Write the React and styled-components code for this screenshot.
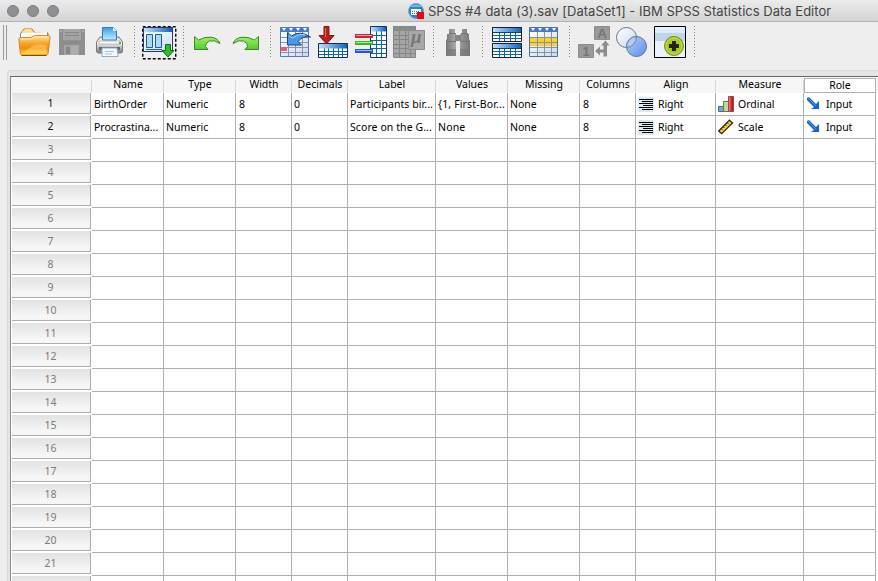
import React from 'react';
import styled, { createGlobalStyle } from 'styled-components';

const GlobalStyle = createGlobalStyle`
  body {
    margin: 0;
    background: #fff;
    overflow: hidden;
  }
  * {
    box-sizing: border-box;
  }
`;

const Window = styled.div`
  display: flex;
  flex-direction: column;
  width: 878px;
  height: 581px;
  overflow: hidden;
  background: #eeeeee;
  font-family: "Noto Sans", "Open Sans", sans-serif;
  color: #000;
`;

const TitleBar = styled.header`
  display: flex;
  flex: none;
  align-items: center;
  height: 22px;
  padding-left: 7px;
  border-bottom: 1px solid #b1b1b1;
  border-top-left-radius: 4px;
  background: linear-gradient(#ebebeb, #d3d3d3);
`;

const Light = styled.span`
  width: 12px;
  height: 12px;
  margin-right: 8px;
  border: 1px solid #7c7b80;
  border-radius: 50%;
  background: #918f94;
`;

const Title = styled.div`
  display: flex;
  align-items: center;
  margin-left: 341px;
  padding-top: 1px;
  gap: 3px;
  color: #454545;
  font: 13px/20px Inter, Roboto, sans-serif;
  letter-spacing: 0.015px;
  white-space: nowrap;
`;

const Toolbar = styled.div`
  display: flex;
  flex: none;
  height: 48px;
  padding: 4px 0 0 3px;
`;

const Grip = styled.div`
  width: 4px;
  height: 35px;
  margin-top: -1px;
  border: solid #999;
  border-width: 0 1px;
`;

const Separator = styled.div`
  width: 1px;
  height: 32px;
  margin-left: ${p => p.$gap}px;
  background: repeating-linear-gradient(#858585 0 1px, transparent 1px 3px);
`;

const Tool = styled.svg`
  display: block;
  flex: none;
  margin-left: ${p => p.$gap}px;
`;

const Panel = styled.main`
  flex: 1;
  min-height: 0;
  margin-left: 7px;
  padding: 5px 0 0 3px;
  border: solid #d9d9d9;
  border-width: 1px 0 0 1px;
  border-top-left-radius: 4px;
  background: #e4e4e4;
`;

const Sheet = styled.div`
  margin-left: -1px;
  height: 505px;
  border: solid #666;
  border-width: 1px 0 0 1px;
  border-left-color: #8c8c8c;
  background: #fff;
  overflow: hidden;
`;

const columnTracks = '81px 72px 72px 56px 56px 88px 72px 72px 56px 80px 88px 72px';

const HeaderRow = styled.div`
  display: grid;
  grid-template-columns: ${columnTracks};
  height: 16px;
  background: #f6f6f6;
`;

const HeaderCell = styled.div`
  margin: ${p => (p.$selected ? '1px 0 0 0' : '3px 0 1px')};
  padding-left: ${p => (p.$selected ? 0 : 1)}px;
  border: ${p => (p.$selected ? '1px solid #b0b0b0' : '0 solid #d5d5d5')};
  border-right-width: 1px;
  background: ${p => (p.$selected ? '#fff' : 'none')};
  font-size: 10.5px;
  line-height: ${p => (p.$selected ? 12 : 9)}px;
  text-align: center;
  white-space: nowrap;
`;

const Row = styled.div`
  display: grid;
  grid-template-columns: ${columnTracks};
  height: 23px;
`;

const RowNumber = styled.div`
  height: 21px;
  margin: 0 1px 0 1px;
  padding-right: 1px;
  border: solid #adadad;
  border-width: 0 1px 1px 0;
  background: linear-gradient(#e2e2e2, #f6f6f6 80%);
  color: ${p => (p.$empty ? '#7b7b7b' : '#111')};
  font-size: 10.5px;
  line-height: 20px;
  text-align: center;
`;

const Cell = styled.div`
  display: flex;
  align-items: center;
  padding: 1px 0 0 ${p => p.$inset || 2}px;
  border: solid #b0b0b0;
  border-width: 0 1px 1px 0;
  font-size: 10.5px;
  line-height: 21px;
  letter-spacing: ${p => p.$tracking || 0}px;
  white-space: nowrap;
  overflow: hidden;
`;

const CellIcon = styled.svg`
  flex: none;
  margin: -1px ${p => p.$gap}px 0 0;
`;

const columns = [
  { name: 'Name' },
  { name: 'Type' },
  { name: 'Width', inset: 3 },
  { name: 'Decimals' },
  { name: 'Label', tracking: 0.08 },
  { name: 'Values', tracking: 0.15 },
  { name: 'Missing' },
  { name: 'Columns', inset: 3 },
  { name: 'Align', tracking: -0.1 },
  { name: 'Measure' },
  { name: 'Role', inset: 3, tracking: -0.1, selected: true },
];

const variables = [
  ['BirthOrder', 'Numeric', '8', '0', 'Participants bir...', '{1, First-Bor...', 'None', '8', 'Right', 'Ordinal', 'Input'],
  ['Procrastina...', 'Numeric', '8', '0', 'Score on the G...', 'None', 'None', '8', 'Right', 'Scale', 'Input'],
];

const lastRow = 21;

const Gradients = () => (
  <svg width="0" height="0" style={{ position: 'absolute' }}>
    <defs>
      <linearGradient id="orange" x2="0" y2="1">
        <stop stopColor="#ffe39a" /><stop offset=".4" stopColor="#f7a531" />
        <stop offset=".65" stopColor="#f58a08" /><stop offset="1" stopColor="#ffdc4a" />
      </linearGradient>
      <linearGradient id="blue" x2="1">
        <stop stopColor="#c0e4ff" /><stop offset="1" stopColor="#0763c7" />
      </linearGradient>
      <linearGradient id="sky" x2="0" y2="1">
        <stop stopColor="#319ef1" /><stop offset="1" stopColor="#c9eeff" />
      </linearGradient>
      <linearGradient id="gray" x2="0" y2="1">
        <stop stopColor="#ddd" /><stop offset=".35" stopColor="#fafafa" /><stop offset="1" stopColor="#777" />
      </linearGradient>
      <linearGradient id="green" x2="0" y2="1">
        <stop stopColor="#a2ef69" /><stop offset="1" stopColor="#50ce23" />
      </linearGradient>
      <linearGradient id="pale" x2="1" y2="1">
        <stop stopColor="#fff" /><stop offset="1" stopColor="#c8d8f4" />
      </linearGradient>
      <linearGradient id="venn" x2="1" y2="1">
        <stop stopColor="#bed3ff" /><stop offset="1" stopColor="#568bea" />
      </linearGradient>
      <linearGradient id="binocular" x2="1">
        <stop stopColor="#777" /><stop offset=".4" stopColor="#aaa" /><stop offset="1" stopColor="#777" />
      </linearGradient>
      <linearGradient id="red" x2="1">
        <stop stopColor="#ff9b94" /><stop offset=".5" stopColor="#ee2626" /><stop offset="1" stopColor="#bd0000" />
      </linearGradient>
    </defs>
  </svg>
);

const AppIcon = () => (
  <svg width="17" height="17" viewBox="0 0 17 17">
    <circle cx="8" cy="8" r="7.5" fill="#2687c7" stroke="#6badd9" />
    <path d="M2 4Q8-1 14 4Z" fill="#72bae7" />
    <path d="M3 6h10v6H3z" fill="#fff" />
    <path d="M4 8.500h8M4 10.500h8" stroke="#2377b5" strokeDasharray="1 1" />
    <path d="M9 9h7v7H9z" fill="#f70009" />
  </svg>
);

const OpenIcon = ({ gap }) => (
  <Tool $gap={gap} width="33" height="34">
    <path d="M3 20V7l3-4h8l3 4h13v15H3z" fill="#fbc658" stroke="#b96d16" />
    <path d="M4 6l3-3h6l3 4v2H4z" fill="#ffe27b" />
    <path d="M2 7h28v8H2z" fill="#4393e1" />
    <path d="M3 7l26-1v9H3z" fill="#f3faff" />
    <path d="M.8 13q0-1.500 2-1.500h10l4-2h14q1.500 0 1.300 2l-2 16q-.2 1.500-2 1.500H4q-1.500 0-1.700-1.500z" fill="url(#orange)" stroke="#d9800f" strokeWidth=".9" />
    <path d="M2.500 13h11l4-2h12" fill="none" stroke="#ffecb8" />
    <path d="M6 26.500Q17 15 29 20l-1 7H6z" fill="#ffe27d" opacity=".45" />
    <path d="M3.500 29.500h25" stroke="#87470c" />
  </Tool>
);

const SaveIcon = ({ gap }) => (
  <Tool $gap={gap} width="26" height="34">
    <path d="M0 3h26v26H0z" fill="#8f8f8f" />
    <path d="M4 3h18v11H4zM5 19h15v10H5z" fill="#a3a3a3" />
    <path d="M6 6.500h14M6 9.500h14M3 16.500h20" stroke="#858585" />
    <path d="M7 21h4v7H7z" fill="#868686" />
    <path d="M12 20h7v9h-7z" fill="#adadad" />
    <path d="M1 4h2v2H1zM23 4h2v2h-2z" fill="#a8a8a8" />
  </Tool>
);

const PrintIcon = ({ gap }) => (
  <Tool $gap={gap} width="27" height="34">
    <path d="M4 11h19l3.500 5v9q0 2-2 2h-22q-2 0-2-2v-9z" fill="url(#gray)" stroke="#777" />
    <path d="M6.500 1.500h11l3 3V14h-14z" fill="url(#sky)" stroke="#287fc9" />
    <path d="M17 1v4h4z" fill="#d7efff" />
    <path d="M3 15h21v3H3z" fill="#f9f9f9" stroke="#999" strokeWidth=".6" />
    <path d="M23 16h2v2h-2z" fill="#3ebb34" />
    <path d="M3 21h21v3H3z" fill="#646464" />
    <path d="M6 22h15l1 8.500H6z" fill="#f5f8fc" stroke="#86aed3" />
    <path d="M9 25.500h9M9 28h7" stroke="#a5c3de" />
  </Tool>
);

const RecallIcon = ({ gap }) => (
  <Tool $gap={gap} width="35" height="34">
    <path d="M.75.75h33v32h-33z" fill="none" stroke="#000" strokeWidth="1.400" strokeDasharray="3 2" />
    <path d="M1.500 1.500h29v24h-29z" fill="#e7f2ff" stroke="#28346e" />
    <path d="M2 2h28v4H2z" fill="url(#blue)" />
    <path d="M3 7h26v18H3z" fill="url(#pale)" />
    <path d="M4.500 8.500h6v13h-6zM13.500 8.500h6v13h-6z" fill="#a9dbf4" stroke="#16609f" />
    <path d="M4 23.500h16" stroke="#1266b5" />
    <path d="M23.500 18.500h5v6h3.500l-6 6.500-6-6.500h3.500z" fill="#2fbd24" stroke="#126d1a" />
  </Tool>
);

const TurnIcon = ({ gap, flip }) => (
  <Tool $gap={gap} width="27" height="34" viewBox="0 0 27 34">
    <g transform={flip ? 'translate(27 0) scale(-1 1)' : undefined}>
      <path d="M.5 10.500L4.500 14Q11 10.500 17 11.200 24 12 26 17.500 20 13.500 15.500 15 11 17 11.500 20.500l2.500 3H.5z" fill="url(#green)" stroke="#277d21" strokeWidth=".9" />
    </g>
  </Tool>
);

// small data grid shared by most of the toolbar pictures
const MiniGrid = ({ x, y, w, h, rows, cols, line = '#0b63c0', fill = '#fff' }) => (
  <g>
    <rect x={x} y={y} width={w} height={h} fill={fill} />
    {Array.from({ length: cols - 1 }, (_, i) => (
      <path key={`c${i}`} d={`M${Math.round(x + ((i + 1) * w) / cols) + 0.5} ${y}v${h}`} stroke={line} />
    ))}
    {Array.from({ length: rows - 1 }, (_, i) => (
      <path key={`r${i}`} d={`M${x} ${Math.round(y + ((i + 1) * h) / rows) + 0.5}h${w}`} stroke={line} />
    ))}
  </g>
);

const HeaderTicks = () => (
  <g>
    <path d="M.5 1h28v5H.5z" fill="#4079dc" />
    <path d="M2 2h4L4 5zM9 2h4l-2 3zM16 2h4l-2 3zM23 2h4l-2 3z" fill="#fff" />
  </g>
);

const GoToCaseIcon = ({ gap }) => (
  <Tool $gap={gap} width="32" height="34">
    <MiniGrid x={0.5} y={6} w={28} h={24.5} rows={5} cols={4} line="#8794ad" fill="url(#pale)" />
    <HeaderTicks />
    <path d="M1 21h6v4H1z" fill="#f95769" />
    <path d="M.5 1.500h28v29H.5z" fill="none" stroke="#567cac" />
    <path d="M7.500 6.500l4 3.500Q20 4 30.500 11 23 9.500 18 15.500l3.500 3.500h-14z" fill="#4c98e8" stroke="#174486" />
    <path d="M9 10l4 2q6-5 12-3" fill="none" stroke="#a4d4ff" />
  </Tool>
);

const GoToVariableIcon = ({ gap }) => (
  <Tool $gap={gap} width="30" height="34">
    <MiniGrid x={1} y={22} w={28} h={9} rows={3} cols={6} />
    <path d="M.5 17.500h29v5H.5z" fill="url(#blue)" />
    <path d="M.5 17.500h29v14H.5z" fill="none" stroke="#152c60" />
    <path d="M6 .5h5v9h5l-7.500 8.500L1 9.500h5z" fill="#bd2019" stroke="#801b15" />
    <path d="M7.500 2v9" stroke="#f2674f" />
  </Tool>
);

const VariablesIcon = ({ gap }) => (
  <Tool $gap={gap} width="32" height="34">
    <MiniGrid x={16} y={5} w={15} h={26} rows={6} cols={3} />
    <path d="M16 .5h15v5H16z" fill="url(#blue)" />
    <path d="M15.500.5h16v31h-16z" fill="none" stroke="#183363" />
    <path d="M0 8h18v4H0z" fill="#d92143" /><path d="M1 9.500h16" stroke="#ffa598" />
    <path d="M0 15h18v4H0z" fill="#39b824" /><path d="M1 16.500h16" stroke="#a9fa70" />
    <path d="M0 23h18v4H0z" fill="#2857c9" /><path d="M1 24.500h16" stroke="#8dc3ff" />
  </Tool>
);

const StatsIcon = ({ gap }) => (
  <Tool $gap={gap} width="32" height="34">
    <MiniGrid x={0.5} y={4} w={22} h={27} rows={6} cols={4} line="#868686" fill="#a5a5a5" />
    <path d="M0 0h23v5H0z" fill="#8b8b8b" />
    <path d="M.5.500h22v31H.5z" fill="none" stroke="#858585" />
    <path d="M15.500 4.500h16v19h-16z" fill="#a7a7a7" stroke="#8c8c8c" />
    <text x="18" y="17" fontFamily="Liberation Serif, serif" fontSize="19" fontStyle="italic" fontWeight="bold" fill="#777">μ</text>
  </Tool>
);

const FindIcon = ({ gap }) => (
  <Tool $gap={gap} width="26" height="34">
    <path d="M3 3h6v5h1v22H0V14l1-1V8h2zM16 3h5v5h2v5l1 2v15H14V8h2z" fill="url(#binocular)" />
    <path d="M9 9h6v6H9z" fill="#858585" />
    <path d="M3 7.500h7M15 7.500h7M1 15.500h9M15 15.500h9" stroke="#737373" />
    <path d="M0 23h10v7H0zM14 23h10v7H14z" fill="#777" opacity=".7" />
  </Tool>
);

const InsertCasesIcon = ({ gap }) => (
  <Tool $gap={gap} width="31" height="34">
    {[1, 17].map(y => (
      <g key={y}>
        <MiniGrid x={1} y={y + 5} w={28} h={9} rows={3} cols={5} />
        <path d={`M.5 ${y + 0.5}h29v5H.5z`} fill="url(#blue)" stroke="#123d74" />
        <path d={`M.5 ${y + 0.5}h29v14H.5z`} fill="none" stroke="#17213d" />
      </g>
    ))}
  </Tool>
);

const SplitIcon = ({ gap }) => (
  <Tool $gap={gap} width="29" height="34">
    <rect x=".5" y="6" width="28" height="25" fill="url(#pale)" />
    <path d="M.5 11h28v9H.5z" fill="#f9d12b" />
    <MiniGrid x={0.5} y={6} w={28} h={24.5} rows={5} cols={4} line="#8792a7" fill="none" />
    <HeaderTicks />
    <path d="M.5 1.500h28v29H.5z" fill="none" stroke="#526f96" />
  </Tool>
);

const LabelsIcon = ({ gap }) => (
  <Tool $gap={gap} width="32" height="34">
    <path d="M16.500.5h15v13h-15zM.5 18.500h15v13H.5z" fill="#999" stroke="#8c8c8c" />
    <g fill="#747474" fontFamily="Liberation Sans, sans-serif" fontWeight="bold" fontSize="13">
      <text x="19.500" y="11.500">A</text>
      <text x="4.500" y="29.500">1</text>
    </g>
    <path d="M17 25l5-4.500v3h3.500v-4H23l4.500-5 4 5h-2.500v11h-3.500v-4H22v3z" fill="#8d8d8d" />
  </Tool>
);

const SetsIcon = ({ gap }) => (
  <Tool $gap={gap} width="32" height="34">
    <circle cx="10.500" cy="11.500" r="10" fill="url(#pale)" stroke="#64748d" />
    <circle cx="20.500" cy="20.500" r="10" fill="url(#venn)" stroke="#5e7396" />
    <path d="M20.300 10.500A10 10 0 0 1 10.600 21.500 10 10 0 0 1 20.300 10.500" fill="#b5cbf4" stroke="#6c7f9c" />
  </Tool>
);

const ShowAllIcon = ({ gap }) => (
  <Tool $gap={gap} width="32" height="34">
    <path d="M.5.5h31v31H.5z" fill="#e9f3ff" />
    <path d="M1 3h30v12H1z" fill="#bdd6ee" />
    <path d="M1 3h30v4H1z" fill="#dcebf8" />
    <path d="M.5.5h31v31H.5z" fill="none" stroke="#000" />
    <circle cx="20" cy="20" r="9.500" fill="#a6cb18" stroke="#6f8d12" />
    <circle cx="20" cy="20" r="8" fill="none" stroke="#c5df45" />
    <path d="M18 15h4v3h3v4h-3v3h-4v-3h-3v-4h3z" fill="#222" />
  </Tool>
);

const AlignIcon = () => (
  <CellIcon $gap={4} width="16" height="15">
    <path d="M0 0h16v15H0z" fill="#dbe9f5" />
    <path d="M1 2.500h14M4 4.500h11M1 6.500h14M5 8.500h10M1 10.500h14M4 12.500h11" stroke="#000" />
  </CellIcon>
);

const OrdinalIcon = () => (
  <CellIcon $gap={4} width="16" height="16">
    <path d="M.5 10.500h5v5h-5z" fill="#6ba6e8" stroke="#596b80" />
    <path d="M5.500 5.500h5v10h-5z" fill="#b7dc9e" stroke="#65745b" />
    <path d="M10.500.5h5v15h-5z" fill="url(#red)" stroke="#815157" />
  </CellIcon>
);

const ScaleIcon = () => (
  <CellIcon $gap={4} width="16" height="16">
    <path d="M.7 12L11.500 1.200 14.500 4 3.700 14.700z" fill="#ffcf28" stroke="#282313" strokeWidth="1.200" />
    <path d="M3 9.500l1.500 1.500M5 7.500l1.500 1.500M7 5.500L8.500 7M9 3.500l1.500 1.500" stroke="#30290b" />
  </CellIcon>
);

const InputIcon = () => (
  <CellIcon $gap={7} width="12" height="16">
    <path d="M0 2l2-1 7 7 3-3v8H4l3-2-7-7z" fill="#1263dc" />
    <path d="M1 2l8 8" stroke="#55a0f6" />
  </CellIcon>
);

const icons = { Right: AlignIcon, Ordinal: OrdinalIcon, Scale: ScaleIcon, Input: InputIcon };

const DataCell = ({ value, column }) => {
  const Icon = icons[value];
  return (
    <Cell $inset={column.inset} $tracking={column.tracking}>
      {Icon && <Icon />}
      {value}
    </Cell>
  );
};

const App = () => (
  <Window>
    <GlobalStyle />
    <Gradients />
    <TitleBar>
      <Light /><Light /><Light />
      <Title>
        <AppIcon />
        <span>SPSS #4 data (3).sav [DataSet1] - IBM SPSS Statistics Data Editor</span>
      </Title>
    </TitleBar>
    <Toolbar>
      <Grip />
      <OpenIcon gap={11} />
      <SaveIcon gap={8} />
      <PrintIcon gap={11} />
      <Separator $gap={11} />
      <RecallIcon gap={7} />
      <Separator $gap={6} />
      <TurnIcon gap={10} />
      <TurnIcon gap={11} flip />
      <Separator $gap={11} />
      <GoToCaseIcon gap={9} />
      <GoToVariableIcon gap={6} />
      <VariablesIcon gap={7} />
      <StatsIcon gap={6} />
      <Separator $gap={8} />
      <FindIcon gap={12} />
      <Separator $gap={10} />
      <InsertCasesIcon gap={9} />
      <SplitIcon gap={6} />
      <Separator $gap={11} />
      <LabelsIcon gap={8} />
      <SetsIcon gap={6} />
      <ShowAllIcon gap={6} />
      <Separator $gap={8} />
    </Toolbar>
    <Panel>
      <Sheet>
        <HeaderRow>
          <HeaderCell />
          {columns.map(col => (
            <HeaderCell key={col.name} $selected={col.selected}>{col.name}</HeaderCell>
          ))}
        </HeaderRow>
        {Array.from({ length: lastRow + 1 }, (_, i) => (
          <Row key={i}>
            <RowNumber $empty={!variables[i]}>{i < lastRow && i + 1}</RowNumber>
            {columns.map((col, j) => (
              <DataCell key={col.name} column={col} value={variables[i] ? variables[i][j] : ''} />
            ))}
          </Row>
        ))}
      </Sheet>
    </Panel>
  </Window>
);

export default App;
